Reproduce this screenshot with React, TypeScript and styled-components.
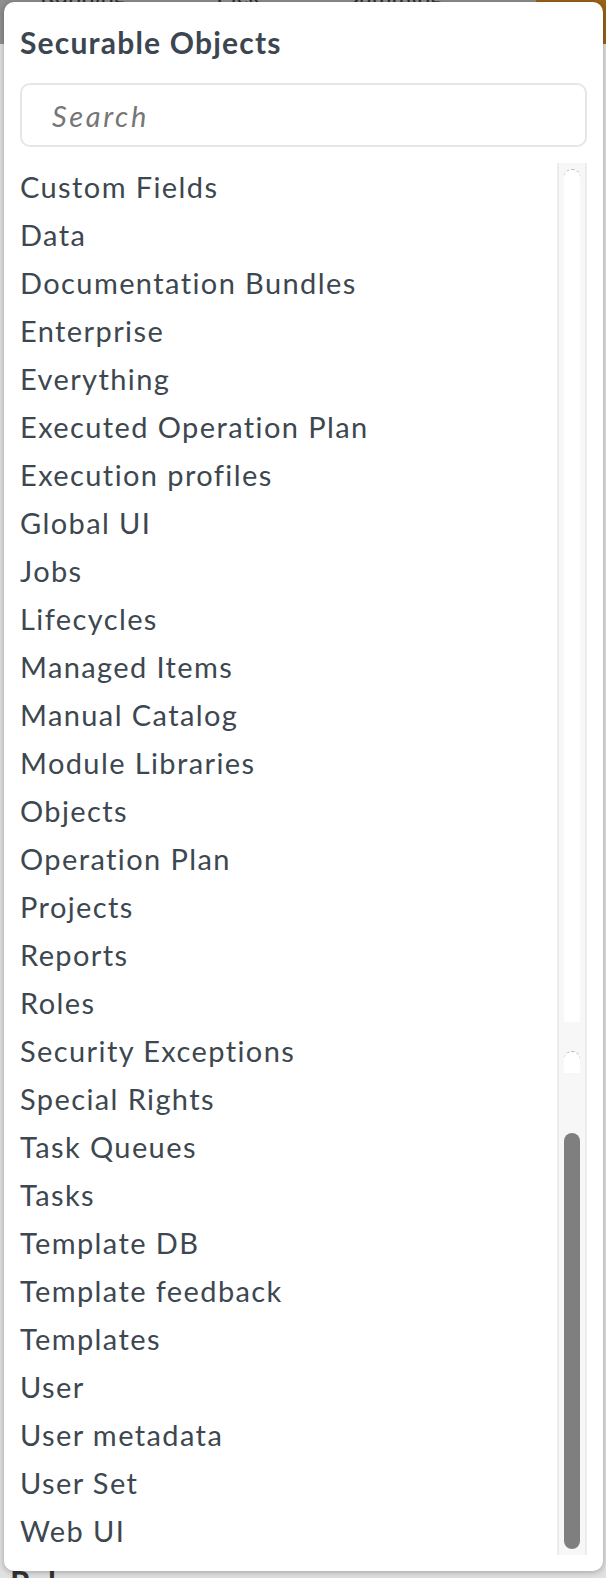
import React from 'react'
import styled, { createGlobalStyle } from 'styled-components'

const GlobalStyle = createGlobalStyle`
  html, body {
    margin: 0;
    padding: 0;
  }
  body {
    background: #e1e1e1;
    font-family: 'Lato', 'Open Sans', sans-serif;
  }
`

const items = [
  'Custom Fields',
  'Data',
  'Documentation Bundles',
  'Enterprise',
  'Everything',
  'Executed Operation Plan',
  'Execution profiles',
  'Global UI',
  'Jobs',
  'Lifecycles',
  'Managed Items',
  'Manual Catalog',
  'Module Libraries',
  'Objects',
  'Operation Plan',
  'Projects',
  'Reports',
  'Roles',
  'Security Exceptions',
  'Special Rights',
  'Task Queues',
  'Tasks',
  'Template DB',
  'Template feedback',
  'Templates',
  'User',
  'User metadata',
  'User Set',
  'Web UI',
]

const Page = styled.div`
  position: relative;
  width: 606px;
  height: 1578px;
  overflow: hidden;
  display: flex;
  flex-direction: column;
`

const TopBar = styled.div`
  height: 44px;
  background: #8f8f8f;
  display: flex;
  align-items: flex-start;
  padding-left: 40px;
  gap: 90px;
`

const TopBarLabel = styled.span`
  margin-top: -20px;
  font-size: 24px;
  color: #2d2d2d;
`

const TopBarButton = styled.div`
  margin-left: auto;
  width: 70px;
  height: 44px;
  background: #9a6316;
`

const PageBody = styled.div`
  flex: 1;
  display: flex;
  flex-direction: column;
  justify-content: flex-end;
  padding: 0 0 0 10px;
`

const SectionHeading = styled.h2`
  margin: 0 0 -24px;
  font-size: 32px;
  font-weight: 700;
  color: #333;
`

const Popover = styled.div`
  position: absolute;
  top: 2px;
  left: 4px;
  width: 599px;
  box-sizing: border-box;
  background: #fff;
  border-radius: 10px;
  box-shadow: 0 1px 6px rgba(0, 0, 0, 0.3);
  padding: 18px 16px 16px 16px;
  display: flex;
  flex-direction: column;
  color: #3d4750;
`

const Title = styled.h3`
  margin: 0;
  font-size: 30px;
  line-height: 44px;
  font-weight: 700;
  letter-spacing: 1.2px;
  color: #3b4651;
`

const SearchInput = styled.input`
  margin-top: 19px;
  height: 64px;
  box-sizing: border-box;
  border: 2px solid #e6e6e6;
  border-radius: 10px;
  padding: 0 0 0 30px;
  font-family: 'Lato', sans-serif;
  font-size: 29px;
  letter-spacing: 2.6px;
  outline: none;
  color: #3d4750;

  &::placeholder {
    color: #767676;
    font-style: italic;
  }
`

const ListArea = styled.div`
  margin-top: 16px;
  display: flex;
`

const List = styled.ul`
  flex: 1;
  list-style: none;
  margin: 0;
  padding: 0;
`

const Item = styled.li`
  height: 48px;
  line-height: 48px;
  font-size: 29px;
  letter-spacing: 1.4px;
  white-space: nowrap;
`

const Track = styled.div`
  width: 30px;
  box-sizing: border-box;
  background: #f7f7f7;
  border-left: 2px solid #ececec;
  border-right: 2px solid #ececec;
  display: flex;
  flex-direction: column;
  align-items: center;
  padding: 6px 0 6px;
`

const Ghost = styled.div<{ $height: number; $gap: number }>`
  width: 16px;
  height: ${p => p.$height}px;
  margin-top: ${p => p.$gap}px;
  background: #fff;
  border-radius: 8px 8px 0 0;
  border-top: 1px dashed #b5b5b5;
  box-sizing: border-box;
`

const Thumb = styled.div`
  width: 16px;
  margin-top: auto;
  height: 416px;
  background: #7f7f7f;
  border-radius: 8px;
`

export default function App() {
  return (
    <>
      <GlobalStyle />
      <Page>
        <TopBar>
          <TopBarLabel>Running</TopBarLabel>
          <TopBarLabel>Pick</TopBarLabel>
          <TopBarLabel>Jamming</TopBarLabel>
          <TopBarButton />
        </TopBar>
        <PageBody>
          <SectionHeading>Rules</SectionHeading>
        </PageBody>
        <Popover>
          <Title>Securable Objects</Title>
          <SearchInput placeholder="Search" />
          <ListArea>
            <List>
              {items.map(name => (
                <Item key={name}>{name}</Item>
              ))}
            </List>
            <Track>
              <Ghost $height={853} $gap={0} />
              <Ghost $height={22} $gap={29} />
              <Thumb />
            </Track>
          </ListArea>
        </Popover>
      </Page>
    </>
  )
}
